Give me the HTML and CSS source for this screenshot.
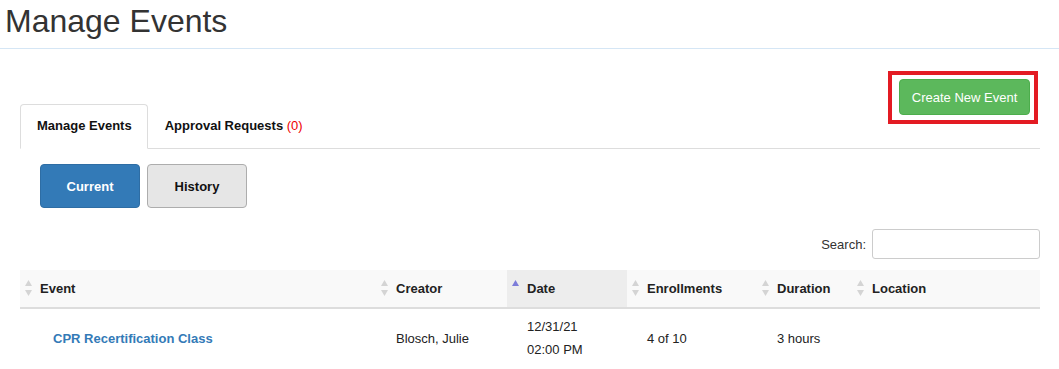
FILE: index.html
```html
<!DOCTYPE html>
<html lang="en">
<head>
<meta charset="UTF-8">
<meta name="viewport" content="width=device-width, initial-scale=1.0">
<title>Manage Events</title>
<link rel="stylesheet" href="styles.css">
</head>
<body>
<h1 class="page-title">Manage Events</h1>
<div class="content">
  <div class="tab-bar">
    <ul class="tabs">
      <li class="tab active">Manage Events</li>
      <li class="tab">Approval Requests <span class="count">(0)</span></li>
    </ul>
    <div class="highlight">
      <button class="btn-create">Create New Event</button>
    </div>
  </div>

  <div class="filter-buttons">
    <button class="btn btn-current">Current</button>
    <button class="btn btn-history">History</button>
  </div>

  <div class="search-row">
    <label for="search">Search:</label>
    <input type="text" id="search">
  </div>

  <table class="events">
    <thead>
      <tr>
        <th class="col-event"><svg class="sort" viewBox="0 0 7 16"><path d="M0 6 L3.5 0 L7 6 Z"/><path d="M0 10 L7 10 L3.5 16 Z"/></svg>Event</th>
        <th class="col-creator"><svg class="sort" viewBox="0 0 7 16"><path d="M0 6 L3.5 0 L7 6 Z"/><path d="M0 10 L7 10 L3.5 16 Z"/></svg>Creator</th>
        <th class="col-date sorted"><svg class="sort asc" viewBox="0 0 7 16"><path d="M0 6 L3.5 0 L7 6 Z"/></svg>Date</th>
        <th class="col-enroll"><svg class="sort" viewBox="0 0 7 16"><path d="M0 6 L3.5 0 L7 6 Z"/><path d="M0 10 L7 10 L3.5 16 Z"/></svg>Enrollments</th>
        <th class="col-duration"><svg class="sort" viewBox="0 0 7 16"><path d="M0 6 L3.5 0 L7 6 Z"/><path d="M0 10 L7 10 L3.5 16 Z"/></svg>Duration</th>
        <th class="col-location"><svg class="sort" viewBox="0 0 7 16"><path d="M0 6 L3.5 0 L7 6 Z"/><path d="M0 10 L7 10 L3.5 16 Z"/></svg>Location</th>
      </tr>
    </thead>
    <tbody>
      <tr>
        <td><a href="#" class="event-link">CPR Recertification Class</a></td>
        <td>Blosch, Julie</td>
        <td>12/31/21<br>02:00 PM</td>
        <td>4 of 10</td>
        <td>3 hours</td>
        <td></td>
      </tr>
    </tbody>
  </table>
</div>
</body>
</html>
```

FILE: styles.css
```css
body {
  font-family: "Liberation Sans", Arial, sans-serif;
  font-size: 13px;
  color: #333;
  margin: 0;
  padding: 0;
}

.page-title {
  font-size: 32px;
  font-weight: normal;
  margin: 0;
  padding: 3px 5px 0;
  height: 45px;
  line-height: 36px;
  border-bottom: 1px solid #d5e6f5;
}

.content {
  padding: 0 19px 0 20px;
}

.tab-bar {
  display: flex;
  align-items: flex-end;
  margin-top: 22px;
  border-bottom: 1px solid #ddd;
}

.tabs {
  display: flex;
  list-style: none;
  margin: 0 0 -1px 0;
  padding: 0;
}

.tab {
  font-weight: bold;
  color: #111;
  padding: 12px 16px 14px 16px;
  line-height: 17px;
  border: 1px solid transparent;
  border-radius: 4px 4px 0 0;
}

.tab.active {
  border-color: #ddd;
  border-bottom-color: #fff;
  background: #fff;
  padding-right: 15px;
}

.count {
  color: #e00;
  font-weight: normal;
}

.highlight {
  margin-left: auto;
  margin-right: 2px;
  margin-bottom: 24px;
  border: 4px solid #e31b23;
  padding: 4px 4px 5px 7px;
}

.btn-create {
  display: block;
  width: 131px;
  height: 36px;
  background: #5cb85c;
  border: 1px solid #4cae4c;
  border-radius: 4px;
  color: #fff;
  font-family: inherit;
  font-size: 13px;
  padding: 0;
}

.filter-buttons {
  display: flex;
  gap: 7px;
  margin: 15px 0 0 20px;
}

.btn {
  width: 100px;
  height: 44px;
  border-radius: 4px;
  font-family: inherit;
  font-size: 13px;
  font-weight: bold;
  padding: 0;
}

.btn-current {
  background: #337ab7;
  border: 1px solid #2e6da4;
  color: #fff;
}

.btn-history {
  background: #e6e6e6;
  border: 1px solid #adadad;
  color: #111;
}

.search-row {
  display: flex;
  justify-content: flex-end;
  align-items: center;
  gap: 6px;
  margin-top: 21px;
}

.search-row label {
  color: #333;
}

.search-row input {
  width: 168px;
  height: 30px;
  box-sizing: border-box;
  border: 1px solid #ccc;
  border-radius: 3px;
}

.events {
  width: 100%;
  border-collapse: collapse;
  margin-top: 11px;
  table-layout: fixed;
}

.events th {
  position: relative;
  text-align: left;
  font-weight: bold;
  color: #222;
  background: #f9f9f9;
  height: 37px;
  padding: 0 10px 0 20px;
  border-bottom: 2px solid #ddd;
}

.events th.sorted {
  background: #ededed;
}

.sort {
  position: absolute;
  left: 5px;
  top: 10px;
  width: 7px;
  height: 16px;
  fill: #d4d4d4;
}

.sort.asc {
  fill: #7c7cd9;
}

/* widths exclude the 30px of cell padding */
.col-event { width: 326px; }
.col-creator { width: 101px; }
.col-date { width: 90px; }
.col-enroll { width: 100px; }
.col-duration { width: 65px; }

.events td {
  padding: 6px 10px 6px 20px;
  line-height: 23px;
  vertical-align: middle;
  color: #222;
}

.event-link {
  color: #337ab7;
  font-weight: bold;
  text-decoration: none;
  padding-left: 13px;
}
```
